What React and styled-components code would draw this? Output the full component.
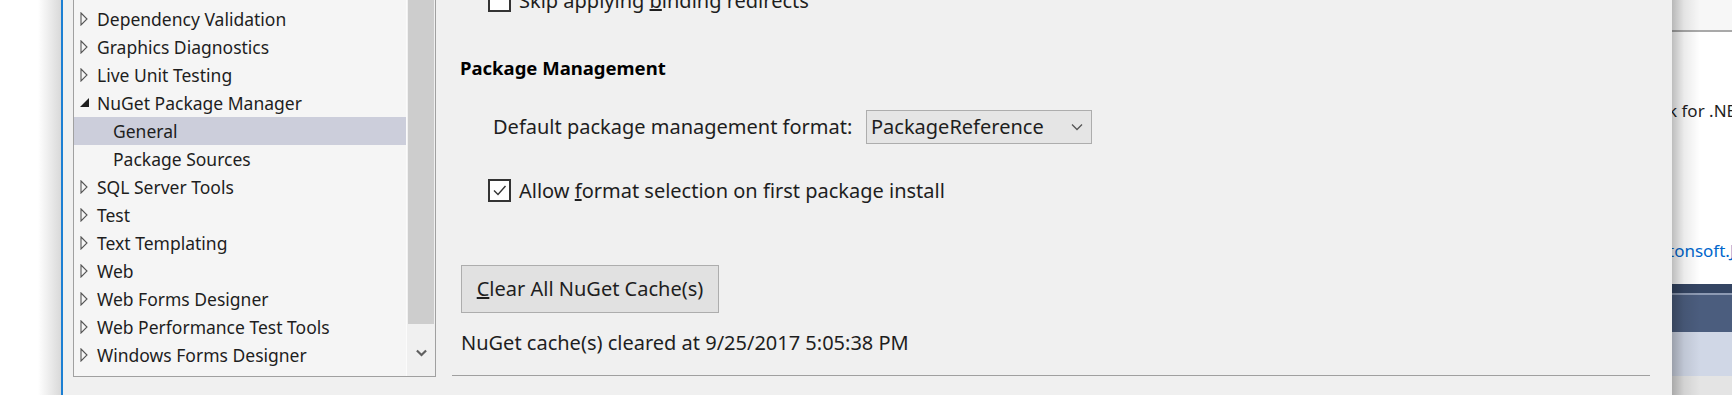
import React from 'react';
import styled, { createGlobalStyle } from 'styled-components';

const GlobalStyle = createGlobalStyle`
  html, body {
    margin: 0;
    padding: 0;
    background: #ffffff;
  }
  body {
    font-family: "Noto Sans", "Liberation Sans", sans-serif;
    font-size: 20px;
    line-height: 24px;
    color: #1e1e1e;
  }
`;

const Screen = styled.div`
  display: flex;
  width: 1732px;
  height: 395px;
  overflow: hidden;
`;

const Backdrop = styled.div`
  width: 61px;
  flex-shrink: 0;
  background: linear-gradient(to right, #ffffff 0, #ffffff 38px, #d9d9d9 61px);
`;

const Dialog = styled.div`
  display: flex;
  width: 1599px;
  flex-shrink: 0;
  border-left: 2px solid #1b7fd3;
  background: #f0f0f0;
  padding-left: 10px;
`;

const TreePanel = styled.div`
  display: flex;
  width: 361px;
  height: 376px;
  flex-shrink: 0;
  border: 1px solid #a0a0a0;
  border-top: none;
  background: #f5f5f5;
  font-size: 17.5px;
`;

const TreeList = styled.ul`
  flex: 1;
  list-style: none;
  margin: 0;
  padding: 5px 0 0;
`;

const Row = styled.li`
  display: flex;
  align-items: center;
  height: 28px;
  padding-left: ${({ child }) => (child ? '39px' : '6px')};
  background: ${({ selected }) => (selected ? '#cccedb' : 'transparent')};
  white-space: nowrap;
`;

const Expander = styled.span`
  display: flex;
  align-items: center;
  width: 10px;
  margin-right: 7px;
`;

const ScrollBar = styled.div`
  display: flex;
  flex-direction: column;
  width: 28px;
  border-left: 1px solid #fbfbfb;
  background: #f0f0f0;
`;

const Thumb = styled.div`
  height: 324px;
  background: #cdcdcd;
  margin: 0 1px;
`;

const ArrowButton = styled.div`
  flex: 1;
  display: flex;
  align-items: center;
  justify-content: center;
  padding-top: 6px;
`;

const Content = styled.div`
  flex: 1;
  display: flex;
  flex-direction: column;
`;

const CheckRow = styled.label`
  display: flex;
  align-items: center;
  gap: 8px;
  height: 23px;
  margin-left: 52px;
  margin-top: ${({ top }) => top}px;
  white-space: nowrap;
`;

const Box = styled.span`
  display: flex;
  align-items: center;
  justify-content: center;
  width: 19px;
  height: 19px;
  border: 2px solid #333333;
  background: #ffffff;
  flex-shrink: 0;
`;

const SectionTitle = styled.div`
  margin: 44px 0 0 24px;
  font-size: 18.5px;
  font-weight: 700;
  color: #000000;
`;

const FieldRow = styled.div`
  display: flex;
  align-items: center;
  margin: 30px 0 0 57px;
`;

const FieldLabel = styled.span`
  width: 373px;
  white-space: nowrap;
`;

const Select = styled.div`
  display: flex;
  align-items: center;
  justify-content: space-between;
  box-sizing: border-box;
  width: 226px;
  height: 34px;
  padding: 0 8px 0 4px;
  border: 1px solid #adadad;
  background: #e5e5e5;
`;

const Button = styled.button`
  box-sizing: border-box;
  width: 258px;
  height: 48px;
  margin: 63px 0 0 25px;
  padding: 0;
  text-align: center;
  font: inherit;
  color: inherit;
  border: 1px solid #adadad;
  background: #e1e1e1;
`;

const Status = styled.div`
  margin: 18px 0 0 25px;
  white-space: nowrap;
`;

const Rule = styled.div`
  height: 1px;
  margin: 20px 22px 0 16px;
  background: #a0a0a0;
`;

const SideWindow = styled.div`
  position: relative;
  flex: 1;
  display: flex;
  flex-direction: column;
  background: #ffffff;
  overflow: hidden;
  white-space: nowrap;
  font-size: 17px;

  &::after {
    content: '';
    position: absolute;
    inset: 0;
    background: linear-gradient(to right, rgba(0, 0, 0, 0.26) 0, rgba(0, 0, 0, 0.08) 12px, rgba(0, 0, 0, 0) 28px);
  }
`;

const SideHeader = styled.div`
  height: 31px;
  background: #f7f7f7;
  border-bottom: 2px solid #a9a9a9;
`;

const SideText = styled.div`
  margin-left: ${({ shift }) => shift}px;
  margin-top: ${({ top }) => top}px;
  color: ${({ link }) => (link ? '#0066cc' : '#1e1e1e')};
`;

const Band = styled.div`
  height: ${({ h }) => h}px;
  background: ${({ color }) => color};
  margin-top: ${({ top }) => top || 0}px;
`;

const Collapsed = () => (
  <svg width="8" height="14" viewBox="0 0 8 14">
    <polygon points="1,1 7,7 1,13" fill="none" stroke="#555555" strokeWidth="1.1" />
  </svg>
);

const Expanded = () => (
  <svg width="10" height="10" viewBox="0 0 10 10">
    <polygon points="9,0 9,9 0,9" fill="#1e1e1e" />
  </svg>
);

const Check = () => (
  <svg width="17" height="17" viewBox="0 0 17 17">
    <polyline points="3,8.5 7,12.5 14.5,4" fill="none" stroke="#333333" strokeWidth="1.4" />
  </svg>
);

const Chevron = ({ color = '#555555', w = 12, bold }) => (
  <svg width={w} height={w / 2 + 2} viewBox="0 0 12 8">
    <polyline points="1,1.5 6,6.5 11,1.5" fill="none" stroke={color} strokeWidth={bold ? 2.4 : 1.3} />
  </svg>
);

const items = [
  { label: 'Dependency Validation' },
  { label: 'Graphics Diagnostics' },
  { label: 'Live Unit Testing' },
  { label: 'NuGet Package Manager', open: true },
  { label: 'General', child: true, selected: true },
  { label: 'Package Sources', child: true },
  { label: 'SQL Server Tools' },
  { label: 'Test' },
  { label: 'Text Templating' },
  { label: 'Web' },
  { label: 'Web Forms Designer' },
  { label: 'Web Performance Test Tools' },
  { label: 'Windows Forms Designer' },
];

export default function App() {
  return (
    <>
      <GlobalStyle />
      <Screen>
        <Backdrop />
        <Dialog>
          <TreePanel>
            <TreeList>
              {items.map((it) => (
                <Row key={it.label} child={it.child} selected={it.selected}>
                  {!it.child && <Expander>{it.open ? <Expanded /> : <Collapsed />}</Expander>}
                  {it.label}
                </Row>
              ))}
            </TreeList>
            <ScrollBar>
              <Thumb />
              <ArrowButton>
                <Chevron color="#606060" w={11} bold />
              </ArrowButton>
            </ScrollBar>
          </TreePanel>
          <Content>
            <CheckRow top={-11}>
              <Box />
              <span>Skip applying <u>b</u>inding redirects</span>
            </CheckRow>
            <SectionTitle>Package Management</SectionTitle>
            <FieldRow>
              <FieldLabel>Default package management format:</FieldLabel>
              <Select>
                <span>PackageReference</span>
                <Chevron />
              </Select>
            </FieldRow>
            <CheckRow top={35}>
              <Box><Check /></Box>
              <span>Allow <u>f</u>ormat selection on first package install</span>
            </CheckRow>
            <Button><u>C</u>lear All NuGet Cache(s)</Button>
            <Status>NuGet cache(s) cleared at 9/25/2017 5:05:38 PM</Status>
            <Rule />
          </Content>
        </Dialog>
        <SideWindow>
          <SideHeader />
          <SideText shift={-4} top={67}>k for .NET Framework</SideText>
          <SideText shift={-4} top={116} link>tonsoft.Json</SideText>
          <Band h={10} color="#344563" top={21} />
          <Band h={2} color="#8d9ab3" />
          <Band h={39} color="#4b5d7e" />
          <Band h={46} color="#d0d7e6" />
          <Band h={20} color="#e4e4e4" />
        </SideWindow>
      </Screen>
    </>
  );
}
